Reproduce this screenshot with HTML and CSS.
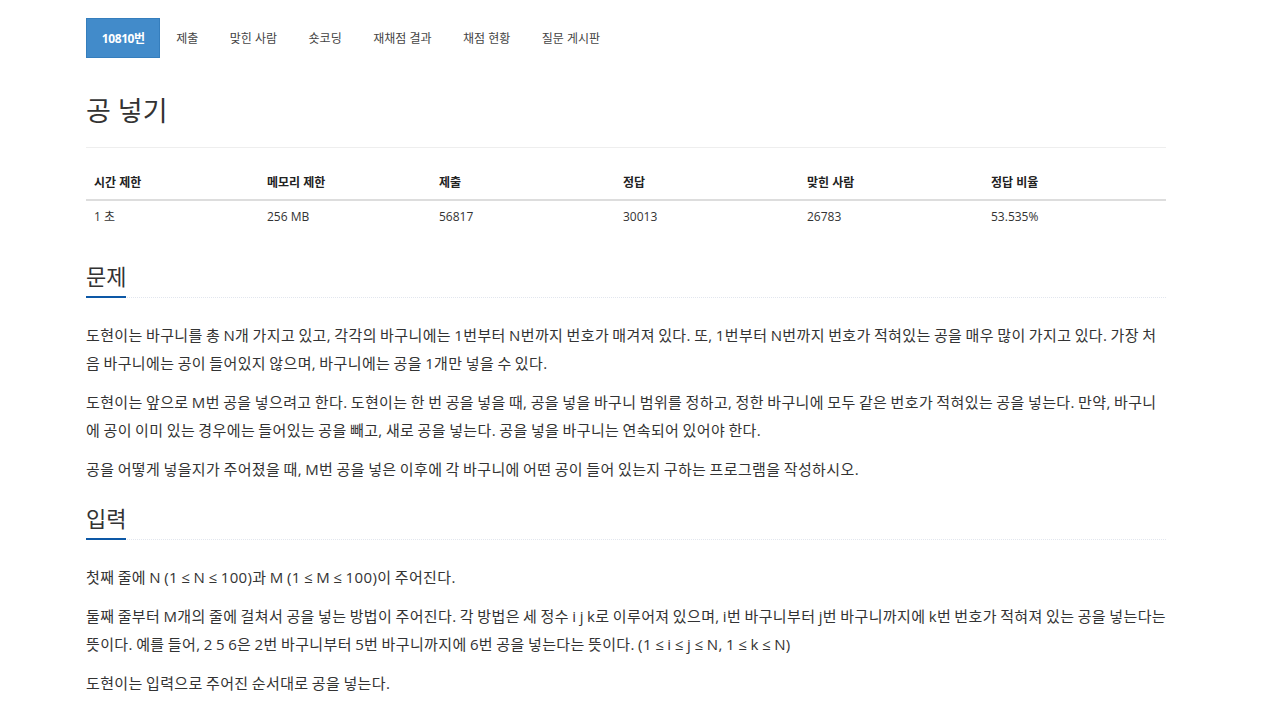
FILE: index.html
```html
<!DOCTYPE html>
<html lang="ko">
<head>
<meta charset="utf-8">
<title>공 넣기</title>
<link rel="stylesheet" href="styles.css">
</head>
<body>
<div class="container">
  <ul class="tabs">
    <li class="tab active">10810번</li>
    <li class="tab">제출</li>
    <li class="tab">맞힌 사람</li>
    <li class="tab">숏코딩</li>
    <li class="tab">재채점 결과</li>
    <li class="tab">채점 현황</li>
    <li class="tab">질문 게시판</li>
  </ul>
  <div class="page-header">
    <h1>공 넣기</h1>
  </div>
  <table class="info">
    <thead>
      <tr><th class="c1">시간 제한</th><th class="c2">메모리 제한</th><th class="c3">제출</th><th class="c4">정답</th><th class="c5">맞힌 사람</th><th>정답 비율</th></tr>
    </thead>
    <tbody>
      <tr><td>1 초</td><td>256 MB</td><td>56817</td><td>30013</td><td>26783</td><td>53.535%</td></tr>
    </tbody>
  </table>
  <section class="section first">
    <div class="headline"><h2>문제</h2></div>
    <p>도현이는 바구니를 총 N개 가지고 있고, 각각의 바구니에는 1번부터 N번까지 번호가 매겨져 있다. 또, 1번부터 N번까지 번호가 적혀있는 공을 매우 많이 가지고 있다. 가장 처음 바구니에는 공이 들어있지 않으며, 바구니에는 공을 1개만 넣을 수 있다.</p>
    <p>도현이는 앞으로 M번 공을 넣으려고 한다. 도현이는 한 번 공을 넣을 때, 공을 넣을 바구니 범위를 정하고, 정한 바구니에 모두 같은 번호가 적혀있는 공을 넣는다. 만약, 바구니에 공이 이미 있는 경우에는 들어있는 공을 빼고, 새로 공을 넣는다. 공을 넣을 바구니는 연속되어 있어야 한다.</p>
    <p>공을 어떻게 넣을지가 주어졌을 때, M번 공을 넣은 이후에 각 바구니에 어떤 공이 들어 있는지 구하는 프로그램을 작성하시오.</p>
  </section>
  <section class="section">
    <div class="headline"><h2>입력</h2></div>
    <p>첫째 줄에 N (1 ≤ N ≤ 100)과 M (1 ≤ M ≤ 100)이 주어진다.</p>
    <p>둘째 줄부터 M개의 줄에 걸쳐서 공을 넣는 방법이 주어진다. 각 방법은 세 정수 i j k로 이루어져 있으며, i번 바구니부터 j번 바구니까지에 k번 번호가 적혀져 있는 공을 넣는다는 뜻이다. 예를 들어, 2 5 6은 2번 바구니부터 5번 바구니까지에 6번 공을 넣는다는 뜻이다. (1 ≤ i ≤ j ≤ N, 1 ≤ k ≤ N)</p>
    <p>도현이는 입력으로 주어진 순서대로 공을 넣는다.</p>
  </section>
</div>
</body>
</html>
```
FILE: styles.css
```css
* { box-sizing: border-box; }
body {
  margin: 0;
  background: #fff;
  color: #333;
  font-family: "Open Sans", "Noto Sans CJK KR", sans-serif;
  font-size: 14px;
}
.container {
  width: 1080px;
  margin-left: 86px;
  padding-top: 18px;
}
.tabs {
  list-style: none;
  margin: 0;
  padding: 0;
  display: flex;
  height: 40px;
}
.tab {
  padding: 0 14.75px;
  line-height: 39px;
  font-size: 12px;
  color: #444;
  border: 1px solid transparent;
}
.tab.active {
  background: #428bca;
  border-color: #357ebd;
  color: #fff;
  font-weight: 700;
  letter-spacing: -0.4px;
}
.page-header {
  margin-top: 35px;
  padding-bottom: 18px;
  border-bottom: 1px solid #eee;
}
.page-header h1 {
  margin: 0;
  font-size: 27px;
  font-weight: 400;
  line-height: 36px;
  color: #333;
}
.info {
  width: 100%;
  border-collapse: collapse;
  margin-top: 18px;
  font-size: 12px;
}
.info th {
  text-align: left;
  font-weight: 700;
  padding: 8px;
  line-height: 17px;
  border-bottom: 2px solid #ddd;
  color: #222;
}
.info td {
  padding: 7px 8px 8px;
  line-height: 17px;
  color: #333;
}
.info .c1 { width: 173px; }
.info .c2 { width: 172px; }
.info .c3 { width: 184px; }
.info .c4 { width: 184px; }
.info .c5 { width: 184px; }
.section { margin-top: 20px; }
.section.first { margin-top: 28px; }
.headline {
  border-bottom: 1px dotted #e2e6ee;
  margin-bottom: 23px;
}
.headline h2 {
  display: inline-block;
  margin: 0;
  font-size: 22px;
  font-weight: 400;
  line-height: 30px;
  padding-bottom: 5px;
  border-bottom: 2px solid #0d58a6;
  margin-bottom: -1px;
}
.section p {
  margin: 0 0 11px;
  font-size: 15px;
  line-height: 28px;
  letter-spacing: 0.38px;
  word-spacing: -1px;
  word-break: break-all;
}
```
